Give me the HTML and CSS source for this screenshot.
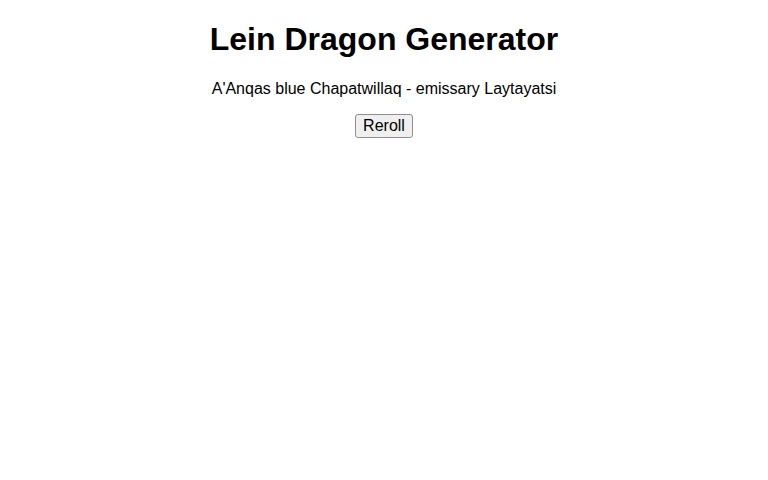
FILE: index.html
```html
<!DOCTYPE html>
<html>
<head>
<meta charset="utf-8">
<link rel="stylesheet" href="styles.css">
</head>
<body>
<div class="app">
  <h1 class="title">Lein Dragon Generator</h1>
  <p class="result">A'Anqas blue Chapatwillaq - emissary Laytayatsi</p>
  <button class="reroll">Reroll</button>
</div>
</body>
</html>
```
FILE: styles.css
```css
html, body {
  margin: 0;
  background: #fff;
}
.app {
  font-family: "Liberation Sans", Arial, sans-serif;
  text-align: center;
  color: #000;
}
.title {
  font-size: 32px;
  font-weight: bold;
  margin: 21.44px 0;
}
.result {
  font-size: 16px;
  margin: 16px 0;
}
.reroll {
  font-family: "Liberation Sans", Arial, sans-serif;
  font-size: 16px;
  padding: 2px 7px;
  border: 1px solid #8f8f8f;
  border-radius: 3px;
  background: #efefef;
  color: #000;
}
```
